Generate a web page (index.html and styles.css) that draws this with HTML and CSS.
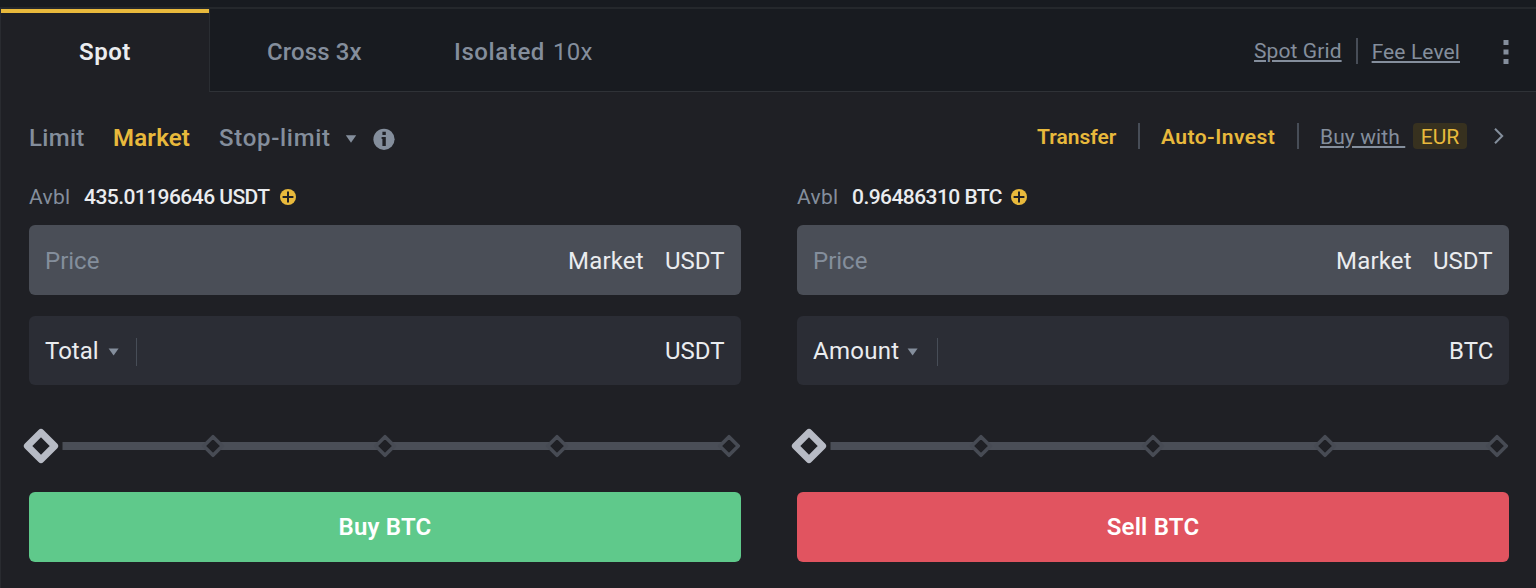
FILE: index.html
```html
<!DOCTYPE html>
<html lang="en">
<head>
  <meta charset="UTF-8" />
  <title>Spot trading</title>
  <link rel="stylesheet" href="styles.css">
</head>
<body>
  <div class="panel">
    <div class="tabs">
      <div class="tab active">Spot</div>
      <div class="tab-list">
        <div class="tab cross">Cross 3x</div>
        <div class="tab isolated"><span>Isolated</span><span class="leverage">10x</span></div>
        <div class="links">
          <a class="link grid">Spot Grid</a>
          <span class="divider"></span>
          <a class="link fee">Fee Level</a>
          <svg class="dots" width="6" height="24" viewBox="0 0 6 24"><path fill="#848e9c" d="M.5 0h5v5h-5zM.5 9.5h5v5h-5zM.5 19h5v5h-5z"/></svg>
        </div>
      </div>
    </div>

    <div class="order-types">
      <div class="types">
        <span class="type limit">Limit</span>
        <span class="type market">Market</span>
        <span class="type stop">Stop-limit</span>
        <svg class="caret" width="12" height="8" viewBox="0 0 12 8"><path fill="#848e9c" d="M.8.3h10.4L6 7.7z"/></svg>
        <svg class="info" width="22" height="22" viewBox="0 0 22 22"><circle cx="11" cy="11.3" r="10.6" fill="#848e9c"/><path fill="#1f2025" d="M9.4 3.8h3.4v3.2H9.4zM8.6 9h4.2v9H9.4v-7h-.8z"/></svg>
      </div>
      <div class="actions">
        <a class="gold transfer">Transfer</a>
        <span class="divider"></span>
        <a class="gold auto">Auto-Invest</a>
        <span class="divider"></span>
        <a class="link buy-with">Buy with&nbsp;</a>
        <span class="eur">EUR</span>
        <svg class="chevron" width="10" height="18" viewBox="0 0 10 18"><path fill="none" stroke="#848e9c" stroke-width="2" d="M1 1.8l7.2 7.2L1 16.2"/></svg>
      </div>
    </div>

    <div class="forms">
      <div class="form">
        <div class="balance">
          <span class="avbl">Avbl</span>
          <span class="value usdt-value">435.01196646 USDT</span>
          <svg width="16" height="16" viewBox="0 0 16 16"><circle cx="8" cy="8" r="8" fill="#e8b93c"/><path stroke="#1f2025" stroke-width="2" d="M8 2.6v10.8M2.6 8h10.8"/></svg>
        </div>
        <div class="field price">
          <span class="placeholder">Price</span>
          <span class="word-market">Market</span>
          <span class="unit usdt">USDT</span>
        </div>
        <div class="field">
          <span class="total">Total</span>
          <svg class="caret-small" width="12" height="8" viewBox="0 0 12 8"><path fill="#848e9c" d="M.6.6h10L5.6 7.4z"/></svg>
          <span class="field-divider"></span>
          <span class="unit usdt">USDT</span>
        </div>
        <svg class="slider" width="720" height="40" viewBox="0 0 720 40">
          <path class="track" d="M41.5 20H708"/>
          <path class="step" d="M192 10.7l9.3 9.3-9.3 9.3-9.3-9.3zM364 10.7l9.3 9.3-9.3 9.3-9.3-9.3zM536 10.7l9.3 9.3-9.3 9.3-9.3-9.3zM708 10.7l9.3 9.3-9.3 9.3-9.3-9.3z"/>
          <path class="thumb" d="M20 6.4l13.6 13.6L20 33.6 6.4 20z"/>
        </svg>
        <button class="buy">Buy BTC</button>
      </div>

      <div class="form">
        <div class="balance">
          <span class="avbl">Avbl</span>
          <span class="value btc-value">0.96486310 BTC</span>
          <svg width="16" height="16" viewBox="0 0 16 16"><circle cx="8" cy="8" r="8" fill="#e8b93c"/><path stroke="#1f2025" stroke-width="2" d="M8 2.6v10.8M2.6 8h10.8"/></svg>
        </div>
        <div class="field price">
          <span class="placeholder">Price</span>
          <span class="word-market">Market</span>
          <span class="unit usdt">USDT</span>
        </div>
        <div class="field">
          <span class="amount">Amount</span>
          <svg class="caret-small" width="12" height="8" viewBox="0 0 12 8"><path fill="#848e9c" d="M.6.6h10L5.6 7.4z"/></svg>
          <span class="field-divider wide"></span>
          <span class="unit btc">BTC</span>
        </div>
        <svg class="slider" width="720" height="40" viewBox="0 0 720 40">
          <path class="track" d="M41.5 20H708"/>
          <path class="step" d="M192 10.7l9.3 9.3-9.3 9.3-9.3-9.3zM364 10.7l9.3 9.3-9.3 9.3-9.3-9.3zM536 10.7l9.3 9.3-9.3 9.3-9.3-9.3zM708 10.7l9.3 9.3-9.3 9.3-9.3-9.3z"/>
          <path class="thumb" d="M20 6.4l13.6 13.6L20 33.6 6.4 20z"/>
        </svg>
        <button class="sell">Sell BTC</button>
      </div>
    </div>
  </div>
</body>
</html>
```
FILE: styles.css
```css
* {
  box-sizing: border-box;
}

body {
  margin: 0;
  background: #181b20;
  color: #eaecef;
  font-family: Roboto, "Liberation Sans", sans-serif;
  font-size: 24px;
  overflow: hidden;
}

span, a {
  white-space: nowrap;
}

svg {
  display: block;
  flex: none;
}

.panel {
  margin-top: 7px;
  height: 581px;
  border-top: 2px solid #25282c;
  border-left: 1px solid #292b30;
  background: #1f2025;
}

/* top tabs */
.tabs {
  display: flex;
  height: 83px;
}

.tab {
  display: flex;
  align-items: center;
  font-weight: 500;
  color: #848e9c;
}

.tab.active {
  width: 209px;
  padding: 0 0 1px 78px;
  border-top: 4px solid #e8b93c;
  color: #eaecef;
  font-weight: 600;
  letter-spacing: 0.5px;
}

.tab-list {
  display: flex;
  flex: 1;
  padding: 3px 0 0 57px;
  margin-left: -1px;
  background: #181b20;
  border-left: 1px solid #2a2d32;
  border-bottom: 1px solid #2f3237;
}

.tab.cross {
  width: 187px;
  letter-spacing: 0.1px;
}

.tab.isolated {
  gap: 8px;
  letter-spacing: 0.6px;
}

.leverage {
  font-weight: 400;
  letter-spacing: 0.2px;
}

.links {
  display: flex;
  align-items: center;
  margin-left: auto;
  padding-right: 27px;
}

.link {
  font-size: 21px;
  letter-spacing: 0.1px;
  color: #848e9c;
  text-decoration: underline;
  text-decoration-thickness: 2px;
  text-underline-offset: 2px;
}

.divider {
  width: 2px;
  height: 26px;
  background: #474d57;
}

.links .divider {
  margin: 0 14px 2px;
}

.grid {
  padding-bottom: 1px;
}

.fee {
  padding-top: 1px;
}

.dots {
  margin-left: 43px;
}

/* order type row */
.order-types {
  display: flex;
  justify-content: space-between;
  height: 92px;
  padding: 0 32px 0 28px;
}

.types, .actions {
  display: flex;
  align-items: center;
}

.actions {
  padding-bottom: 4px;
}

.type {
  font-weight: 500;
  color: #848e9c;
}

.type.limit {
  width: 84px;
  letter-spacing: 0.3px;
}

.type.market {
  width: 106px;
  color: #e8b93c;
  font-weight: 600;
  letter-spacing: 0.2px;
}

.type.stop {
  width: 126px;
  letter-spacing: 0.7px;
}

.info {
  margin-left: 16px;
}

.caret, .info {
  margin-top: 2px;
}

.gold {
  padding-top: 2px;
  font-size: 21px;
  font-weight: 600;
  color: #e8b93c;
}

.transfer {
  width: 101px;
}

.auto {
  width: 136px;
  margin-left: 21px;
  letter-spacing: 0.45px;
}

.buy-with {
  width: 86px;
  margin-left: 21px;
  padding-top: 2px;
}

.eur {
  width: 54px;
  height: 26px;
  margin-left: 7px;
  border-radius: 4px;
  background: #37311f;
  color: #e8b93c;
  font-size: 21px;
  line-height: 28px;
  text-align: center;
}

.chevron {
  margin-left: 27px;
}

/* forms */
.forms {
  display: grid;
  grid-template-columns: 712px 712px;
  column-gap: 56px;
  padding-left: 28px;
}

.balance {
  display: flex;
  align-items: center;
  height: 26px;
  margin-bottom: 15px;
  font-size: 21px;
}

.avbl {
  width: 55px;
  letter-spacing: 0.3px;
  color: #848e9c;
}

.value {
  font-weight: 500;
  letter-spacing: -0.55px;
}

.usdt-value {
  width: 196px;
}

.btc-value {
  width: 159px;
}

.field {
  display: flex;
  align-items: center;
  height: 69px;
  padding: 0 16px;
  margin-bottom: 22px;
  border-radius: 6px;
  background: #2b2d35;
}

.field.price {
  height: 70px;
  padding-top: 1px;
  margin-bottom: 21px;
  background: #4a4e57;
}

.placeholder {
  color: #848e9c;
}

.word-market {
  width: 97px;
  margin-left: auto;
  letter-spacing: 0.2px;
}

.unit.usdt {
  width: 60px;
}

.unit.btc {
  width: 44px;
}

.total {
  width: 63px;
}

.amount {
  width: 94px;
  letter-spacing: 0.3px;
}

.field-divider {
  width: 1px;
  height: 28px;
  margin: 2px auto 0 16px;
  background: #474d57;
}

.field-divider.wide {
  margin-left: 18px;
}

.caret-small {
  margin-top: 3px;
}

.slider {
  margin: 41px 0 26px -8px;
}

.track {
  stroke: #4a4e57;
  stroke-width: 8;
}

.step {
  fill: #1f2025;
  stroke: #474b54;
  stroke-width: 3.5;
  stroke-linejoin: round;
}

.thumb {
  fill: #1f2025;
  stroke: #b7bbc5;
  stroke-width: 7;
  stroke-linejoin: round;
}

button {
  display: flex;
  align-items: center;
  justify-content: center;
  width: 100%;
  height: 70px;
  padding: 0;
  border: none;
  border-radius: 6px;
  color: #fff;
  font-family: inherit;
  font-size: 24px;
  font-weight: 600;
  letter-spacing: 0.2px;
}

.buy {
  background: #5fc98b;
}

.sell {
  background: #e15460;
}
```
